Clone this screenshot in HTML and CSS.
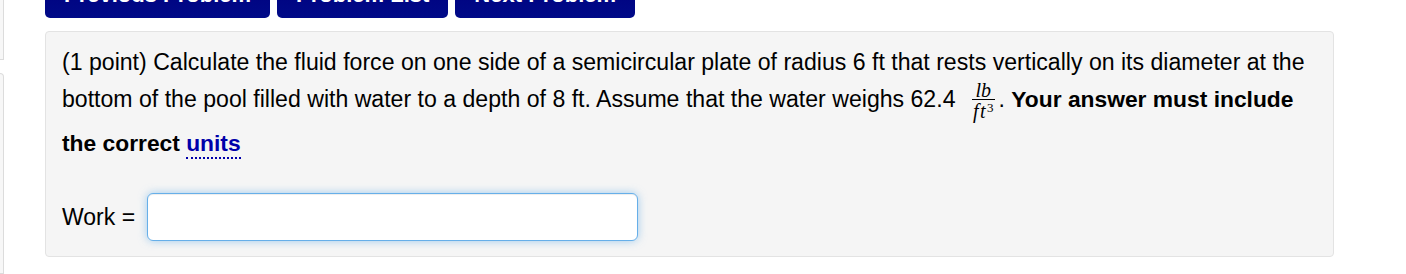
FILE: index.html
```html
<!DOCTYPE html>
<html>
<head>
<meta charset="utf-8">
<link rel="stylesheet" href="styles.css">
</head>
<body>
<div class="page">
  <div class="sidebar">
    <div class="side-top"></div>
    <div class="side-bottom"></div>
  </div>
  <main class="main">
    <div class="nav">
      <button class="nav-btn">Previous Problem</button>
      <button class="nav-btn">Problem List</button>
      <button class="nav-btn">Next Problem</button>
    </div>
    <div class="problem">
      <p class="text">(1 point) Calculate the fluid force on one side of a semicircular plate of radius 6 ft that rests vertically on its diameter at the bottom of the pool filled with water to a depth of 8 ft. Assume that the water weighs 62.4 <span class="frac"><span class="num">lb</span><span class="den">ft<sup>3</sup></span></span>. <b class="strong">Your answer must include the correct <a class="units">units</a></b></p>
      <div class="answer">
        <label class="label">Work =</label>
        <input class="field" type="text">
      </div>
    </div>
  </main>
</div>
</body>
</html>
```
FILE: styles.css
```css
html, body {
  margin: 0;
  padding: 0;
  background: #ffffff;
}
body {
  font-family: "Liberation Sans", Arial, sans-serif;
  color: #000;
  width: 1406px;
  height: 274px;
  overflow: hidden;
}
.page {
  display: flex;
  gap: 41px;
  height: 274px;
}
.sidebar {
  width: 4px;
  display: flex;
  flex-direction: column;
  gap: 13px;
}
.side-top {
  height: 60px;
  background: #f7f7f7;
  border-right: 1px solid #dcdcdc;
  border-bottom: 1px solid #dcdcdc;
  box-sizing: border-box;
}
.side-bottom {
  flex: 1;
  background: #f7f7f7;
  border: 1px solid #dcdcdc;
  border-left: none;
  border-radius: 0 6px 0 0;
  box-sizing: border-box;
}
.main {
  width: 1289px;
}
.nav {
  display: flex;
  gap: 7px;
  margin-top: -22px;
}
.nav-btn {
  font-family: "Liberation Sans", Arial, sans-serif;
  font-weight: bold;
  font-size: 22px;
  color: #fff;
  background: linear-gradient(#00007e, #000a88);
  border: none;
  border-radius: 5px;
  padding: 0 19px 6px 19px;
  height: 40px;
  line-height: 34px;
  box-sizing: border-box;
}
.problem {
  margin-top: 13px;
  background: #f5f5f5;
  border: 1px solid #e3e3e3;
  border-radius: 4px;
  padding: 12px 16px 15px 16px;
  height: 226px;
  box-sizing: border-box;
}
.text {
  margin: 0;
  font-size: 23.1px;
  line-height: 37px;
}
.strong {
  font-size: 22.8px;
}
.frac {
  display: inline-flex;
  flex-direction: column;
  align-items: center;
  vertical-align: 10px;
  font-family: "Liberation Serif", "Times New Roman", serif;
  font-style: italic;
  font-size: 20px;
  line-height: 18px;
  margin: 0 4px 0 10px;
  padding: 0 0 5px 0;
}
.num {
  display: block;
  align-self: stretch;
  text-align: center;
  border-bottom: 1.5px solid #000;
  padding: 0 2px;
}
.den {
  display: block;
  padding: 2px 1px 0 1px;
  letter-spacing: 1.5px;
}
.den sup {
  font-size: 13px;
  font-style: normal;
  vertical-align: 6px;
  line-height: 0;
  letter-spacing: 0;
}
.units {
  color: #0000aa;
  border-bottom: 2px dotted #0000aa;
  text-decoration: none;
  padding-bottom: 1px;
}
.answer {
  display: flex;
  align-items: center;
  gap: 12px;
  margin-top: 31px;
}
.label {
  font-size: 23px;
}
.field {
  width: 491px;
  height: 48px;
  box-sizing: border-box;
  border: 1px solid #66afe9;
  border-radius: 6px;
  background: #fff;
  box-shadow: inset 0 1px 1px rgba(0,0,0,.075), 0 0 8px rgba(102,175,233,.6);
  outline: none;
  margin: 0;
}
```
